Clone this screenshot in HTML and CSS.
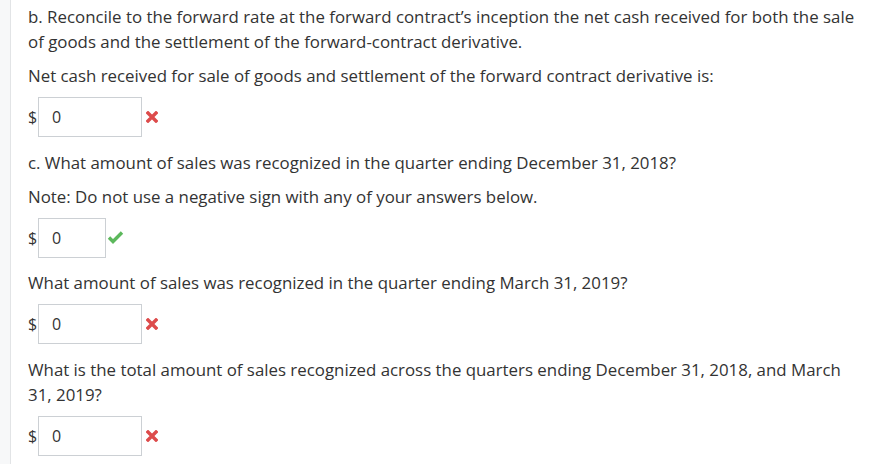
FILE: index.html
```html
<!DOCTYPE html>
<html>
<head>
<meta charset="utf-8">
<link rel="stylesheet" href="styles.css">
</head>
<body>
<div class="page">
  <div class="rail"></div>
  <div class="content">
    <p class="q">b. Reconcile to the forward rate at the forward contract’s inception the net cash received for both the sale of goods and the settlement of the forward-contract derivative.</p>
    <p class="q">Net cash received for sale of goods and settlement of the forward contract derivative is:</p>
    <div class="answer">
      <span class="cur">$</span><span class="box wide">0</span>
      <svg class="mark cross" width="12" height="12" viewBox="0 0 12 12"><path d="M2 2 L10 10 M10 2 L2 10" stroke="#dd4b4b" stroke-width="3.4" stroke-linecap="square"/></svg>
    </div>
    <p class="q">c. What amount of sales was recognized in the quarter ending December 31, 2018?</p>
    <p class="q">Note: Do not use a negative sign with any of your answers below.</p>
    <div class="answer">
      <span class="cur">$</span><span class="box narrow">0</span>
      <svg class="mark check" width="17" height="13" viewBox="0 0 17 13"><path d="M2 6.5 L6 10.5 L15 1.5" fill="none" stroke="#5cb85c" stroke-width="3.4"/></svg>
    </div>
    <p class="q">What amount of sales was recognized in the quarter ending March 31, 2019?</p>
    <div class="answer">
      <span class="cur">$</span><span class="box wide">0</span>
      <svg class="mark cross" width="12" height="12" viewBox="0 0 12 12"><path d="M2 2 L10 10 M10 2 L2 10" stroke="#dd4b4b" stroke-width="3.4" stroke-linecap="square"/></svg>
    </div>
    <p class="q">What is the total amount of sales recognized across the quarters ending December 31, 2018, and March 31, 2019?</p>
    <div class="answer">
      <span class="cur">$</span><span class="box wide">0</span>
      <svg class="mark cross" width="12" height="12" viewBox="0 0 12 12"><path d="M2 2 L10 10 M10 2 L2 10" stroke="#dd4b4b" stroke-width="3.4" stroke-linecap="square"/></svg>
    </div>
  </div>
</div>
</body>
</html>
```
FILE: styles.css
```css
html, body {
  margin: 0;
  padding: 0;
  background: #ffffff;
}
.page {
  display: flex;
  min-height: 464px;
  font-family: "Open Sans", "Liberation Sans", sans-serif;
  font-size: 16.85px;
  color: #333333;
}
.rail {
  width: 10px;
  flex: none;
  background: #f7f8f9;
  border-right: 1px solid #e2e4e6;
}
.content {
  padding: 4px 17px 0 17px;
  flex: 1;
}
.q {
  margin: 0 0 9px 0;
  line-height: 25px;
}
.answer {
  display: flex;
  align-items: center;
  margin: 8px 0 12.5px 0;
}
.cur {
  width: 10px;
  font-size: 16px;
}
.box {
  display: block;
  box-sizing: border-box;
  height: 40px;
  line-height: 38px;
  border: 1px solid #ccd0d4;
  padding-left: 13px;
  font-size: 16px;
}
.wide { width: 104px; }
.narrow { width: 68px; }
.cross { margin-left: 4px; }
.check { margin-left: 1px; }
```
